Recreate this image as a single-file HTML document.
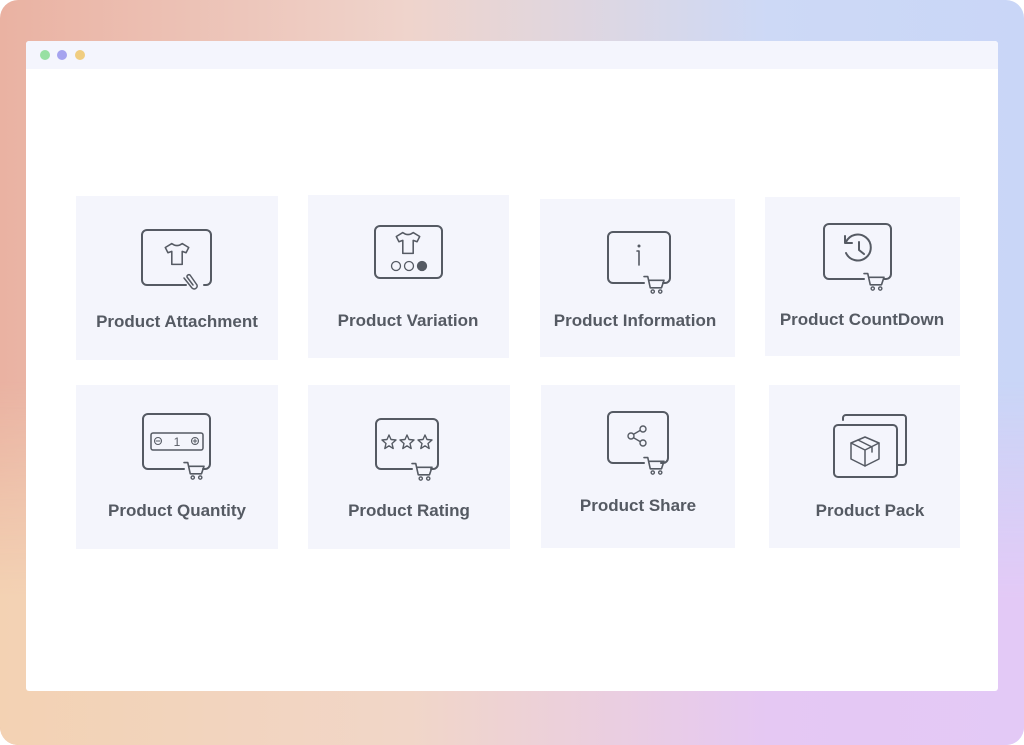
<!DOCTYPE html>
<html><head><meta charset="utf-8"><style>
html,body{margin:0;padding:0}
body{width:1024px;height:745px;position:relative;overflow:hidden;background:#fff;font-family:"Liberation Sans",sans-serif}
.bg{position:absolute;left:0;top:0;width:1024px;height:745px;border-radius:18px;
background:linear-gradient(90deg,#eab2a2 0%,#efd4cc 40%,#cdd9f6 75%,#c9d6f7 100%);overflow:hidden}
.bot{position:absolute;left:0;top:380px;width:1024px;height:365px;background:linear-gradient(90deg,#f3d2b3 0%,#f1d6c8 40%,#e5c8f3 75%,#e3c9f6 100%);-webkit-mask:linear-gradient(180deg,transparent,#000 60%);mask:linear-gradient(180deg,transparent,#000 60%)}
.win{position:absolute;left:26px;top:41px;width:972px;height:650px;background:#fff;border-radius:3px;overflow:hidden}
.bar{height:28px;background:#f4f5fd}
.dot{position:absolute;top:9px;width:10px;height:10px;border-radius:50%}
.card{position:absolute;background:#f4f5fc}
.lbl{position:absolute;font-weight:bold;font-size:17px;color:#555a63;white-space:nowrap;transform:translateX(-50%)}
svg{position:absolute;left:0;top:0}
</style></head><body>
<div class="bg"><div class="bot"></div></div>
<div class="win"><div class="bar"></div>
<div class="dot" style="left:14px;background:#98e0a3"></div>
<div class="dot" style="left:31px;background:#a5a3ef"></div>
<div class="dot" style="left:49px;background:#f0cd80"></div>
</div>
<div class="card" style="left:76px;top:196px;width:202px;height:164px"></div>
<div class="card" style="left:308px;top:195px;width:201px;height:163px"></div>
<div class="card" style="left:540px;top:199px;width:195px;height:158px"></div>
<div class="card" style="left:765px;top:197px;width:195px;height:159px"></div>
<div class="card" style="left:76px;top:385px;width:202px;height:164px"></div>
<div class="card" style="left:308px;top:385px;width:202px;height:164px"></div>
<div class="card" style="left:541px;top:385px;width:194px;height:163px"></div>
<div class="card" style="left:769px;top:385px;width:191px;height:163px"></div>
<div class="lbl" style="left:177px;top:312px">Product Attachment</div>
<div class="lbl" style="left:408px;top:311px">Product Variation</div>
<div class="lbl" style="left:635px;top:311px">Product Information</div>
<div class="lbl" style="left:862px;top:310px">Product CountDown</div>
<div class="lbl" style="left:177px;top:501px">Product Quantity</div>
<div class="lbl" style="left:409px;top:501px">Product Rating</div>
<div class="lbl" style="left:638px;top:496px">Product Share</div>
<div class="lbl" style="left:870px;top:501px">Product Pack</div>
<svg width="1024" height="745" fill="none" stroke="#555a63" stroke-width="2" stroke-linecap="round" stroke-linejoin="round">
<defs><g id="cart" transform="scale(1.25)"><path d="M-8 -6h3l2 9h9l2-6h-12" stroke-width="1.3"/><circle cx="-1" cy="6" r="1.3" stroke-width="1.1"/><circle cx="5" cy="6" r="1.3" stroke-width="1.1"/></g>
<path id="tee" transform="scale(1.3)" d="M-4 -8l-5 3 2 4 3-1v10h8v-10l3 1 2-4-5-3q-4 3-8 0z" stroke-width="1.2"/></defs>
<path d="M186 285h-39a5 5 0 0 1-5-5v-45a5 5 0 0 1 5-5h59a5 5 0 0 1 5 5v45a5 5 0 0 1-5 5h-2"/>
<use href="#tee" x="177" y="254"/>
<path d="M184 278l8 10a3 3 0 0 0 5-3l-7-10a2 2 0 0 0-3 2l6 8" stroke-width="1.5"/>
<rect x="375" y="226" width="67" height="52" rx="5"/>
<use href="#tee" x="408" y="243"/>
<circle cx="396" cy="266" r="4.5" stroke-width="1.3"/><circle cx="409" cy="266" r="4.5" stroke-width="1.3"/><circle cx="422" cy="266" r="4.5" fill="#555a63" stroke-width="1.3"/>
<path d="M644 283h-31a5 5 0 0 1-5-5v-41a5 5 0 0 1 5-5h52a5 5 0 0 1 5 5v41a5 5 0 0 1-5 5h-2"/>
<circle cx="639" cy="246" r="1.5" fill="#555a63" stroke="none"/><path d="M637 251h2v14" stroke-width="1.6"/>
<use href="#cart" x="654" y="284"/>
<path d="M864 279h-35a5 5 0 0 1-5-5v-45a5 5 0 0 1 5-5h57a5 5 0 0 1 5 5v45a5 5 0 0 1-5 5h-2"/>
<path d="M846 242a13 13 0 1 1 0 11" /><path d="M845 236v7h7"/><path d="M859 242v8l5 4"/>
<use href="#cart" x="874" y="281"/>
<path d="M184 469h-36a5 5 0 0 1-5-5v-45a5 5 0 0 1 5-5h57a5 5 0 0 1 5 5v45a5 5 0 0 1-5 5h-2"/>
<rect x="151" y="433" width="52" height="17" rx="2" stroke-width="1.5"/>
<circle cx="158" cy="441" r="3.5" stroke-width="1"/><circle cx="195" cy="441" r="3.5" stroke-width="1"/>
<path d="M156 441h4M193 441h4M195 439v4" stroke-width="1"/>
<text x="177" y="446" font-family="Liberation Sans" font-size="12" fill="#555a63" stroke="none" text-anchor="middle">1</text>
<use href="#cart" x="194" y="470"/>
<path d="M412 469h-31a5 5 0 0 1-5-5v-40a5 5 0 0 1 5-5h52a5 5 0 0 1 5 5v40a5 5 0 0 1-5 5h-2"/>
<g stroke-width="1.4">
<path d="M389 435l2 4.5 5 .5-4 3.5 1.2 5-4.2-2.7-4.2 2.7 1.2-5-4-3.5 5-.5z"/>
<path d="M407 435l2 4.5 5 .5-4 3.5 1.2 5-4.2-2.7-4.2 2.7 1.2-5-4-3.5 5-.5z"/>
<path d="M425 435l2 4.5 5 .5-4 3.5 1.2 5-4.2-2.7-4.2 2.7 1.2-5-4-3.5 5-.5z"/></g>
<use href="#cart" x="422" y="471"/>
<path d="M644 463h-31a5 5 0 0 1-5-5v-41a5 5 0 0 1 5-5h50a5 5 0 0 1 5 5v41a5 5 0 0 1-5 5h-2"/>
<g stroke-width="1.4"><circle cx="643" cy="429" r="3"/><circle cx="631" cy="436" r="3"/><circle cx="643" cy="443" r="3"/><path d="M634 434l6-3.5M634 438l6 3.5"/></g>
<use href="#cart" x="654" y="465"/>
<path d="M843 420v-2a3 3 0 0 1 3-3h57a3 3 0 0 1 3 3v44a3 3 0 0 1-3 3h-6"/>
<rect x="834" y="425" width="63" height="52" rx="4"/>
<g stroke-width="1.5"><path d="M865 437l-14 6v16l14 7 14-7v-16z"/><path d="M851 443l14 7 14-7M865 450v16M858 440l14 7v5"/></g>
</svg>
</body></html>
